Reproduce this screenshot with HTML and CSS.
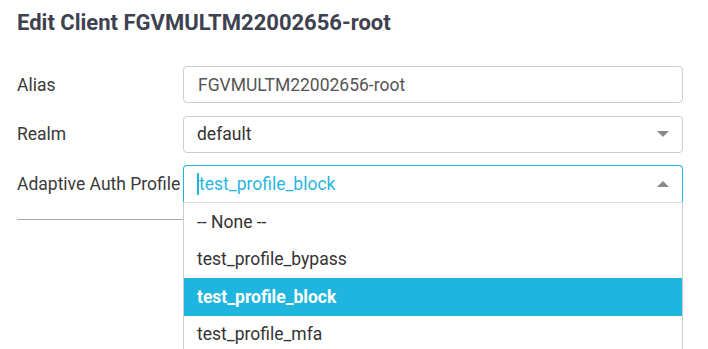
FILE: index.html
```html
<!DOCTYPE html>
<html>
<head>
<meta charset="utf-8">
<link rel="stylesheet" href="styles.css">
</head>
<body>
<div class="page">
  <h1 class="title">Edit Client FGVMULTM22002656-root</h1>
  <div class="form">
    <div class="row">
      <label class="label">Alias</label>
      <div class="field input">FGVMULTM22002656-root</div>
    </div>
    <div class="row">
      <label class="label">Realm</label>
      <div class="field select"><span>default</span><span class="arrow down"></span></div>
    </div>
    <div class="row">
      <label class="label">Adaptive Auth Profile</label>
      <div class="combo">
        <div class="field select focused"><span class="caret"></span><span class="typed">test_profile_block</span><span class="arrow up"></span></div>
        <ul class="menu">
          <li class="item">-- None --</li>
          <li class="item">test_profile_bypass</li>
          <li class="item active">test_profile_block</li>
          <li class="item">test_profile_mfa</li>
        </ul>
      </div>
    </div>
  </div>
  <div class="divider"></div>
</div>
</body>
</html>
```
FILE: styles.css
```css
html, body {
  margin: 0;
  padding: 0;
  background: #fff;
}
body {
  font-family: Roboto, "Liberation Sans", sans-serif;
  font-size: 17.5px;
  color: #333;
}
.page {
  box-sizing: border-box;
  min-height: 349px;
  padding: 0 25px 0 17px;
}
.title {
  margin: 10px 0 0 0;
  font-size: 22px;
  line-height: 26px;
  font-weight: 700;
  color: #3e4150;
}
.form {
  margin-top: 30px;
  display: flex;
  flex-direction: column;
  gap: 12.5px;
}
.row {
  display: grid;
  grid-template-columns: 166px 500px;
  align-items: center;
}
.label {
  color: #3a3a3a;
  white-space: nowrap;
}
.field {
  box-sizing: border-box;
  height: 37px;
  border: 1px solid #ccc;
  border-radius: 4px;
  padding: 0 14px 0 14px;
  display: flex;
  align-items: center;
  color: #555;
}
.select {
  padding-left: 13px;
  justify-content: space-between;
  color: #333;
}
.arrow {
  width: 0;
  height: 0;
  border-left: 6px solid transparent;
  border-right: 6px solid transparent;
  margin-right: -1px;
}
.arrow.down {
  border-top: 6px solid #8a8a8a;
}
.arrow.up {
  border-bottom: 6px solid #8a8a8a;
}
.combo {
  position: relative;
}
.focused {
  border-color: #1fb3dd;
  border-bottom: none;
  border-radius: 4px 4px 0 0;
  justify-content: flex-start;
}
.caret {
  width: 2px;
  height: 22px;
  background: #1fb3dd;
}
.typed {
  color: #2ab6e0;
  flex: 1;
}
.menu {
  position: absolute;
  left: 0;
  right: 0;
  top: 37px;
  margin: 0;
  padding: 0;
  list-style: none;
  background: #fff;
  border: 1px solid #ccc;
  border-top: 1px solid #ddd;
  z-index: 2;
}
.item {
  height: 37.5px;
  display: flex;
  align-items: center;
  padding-left: 13px;
  color: #333;
}
.item.active {
  background: #1fb5de;
  color: #fff;
  font-weight: 700;
}
.divider {
  margin-top: 17px;
  width: 666px;
  height: 1px;
  background: #aaa;
}
```
